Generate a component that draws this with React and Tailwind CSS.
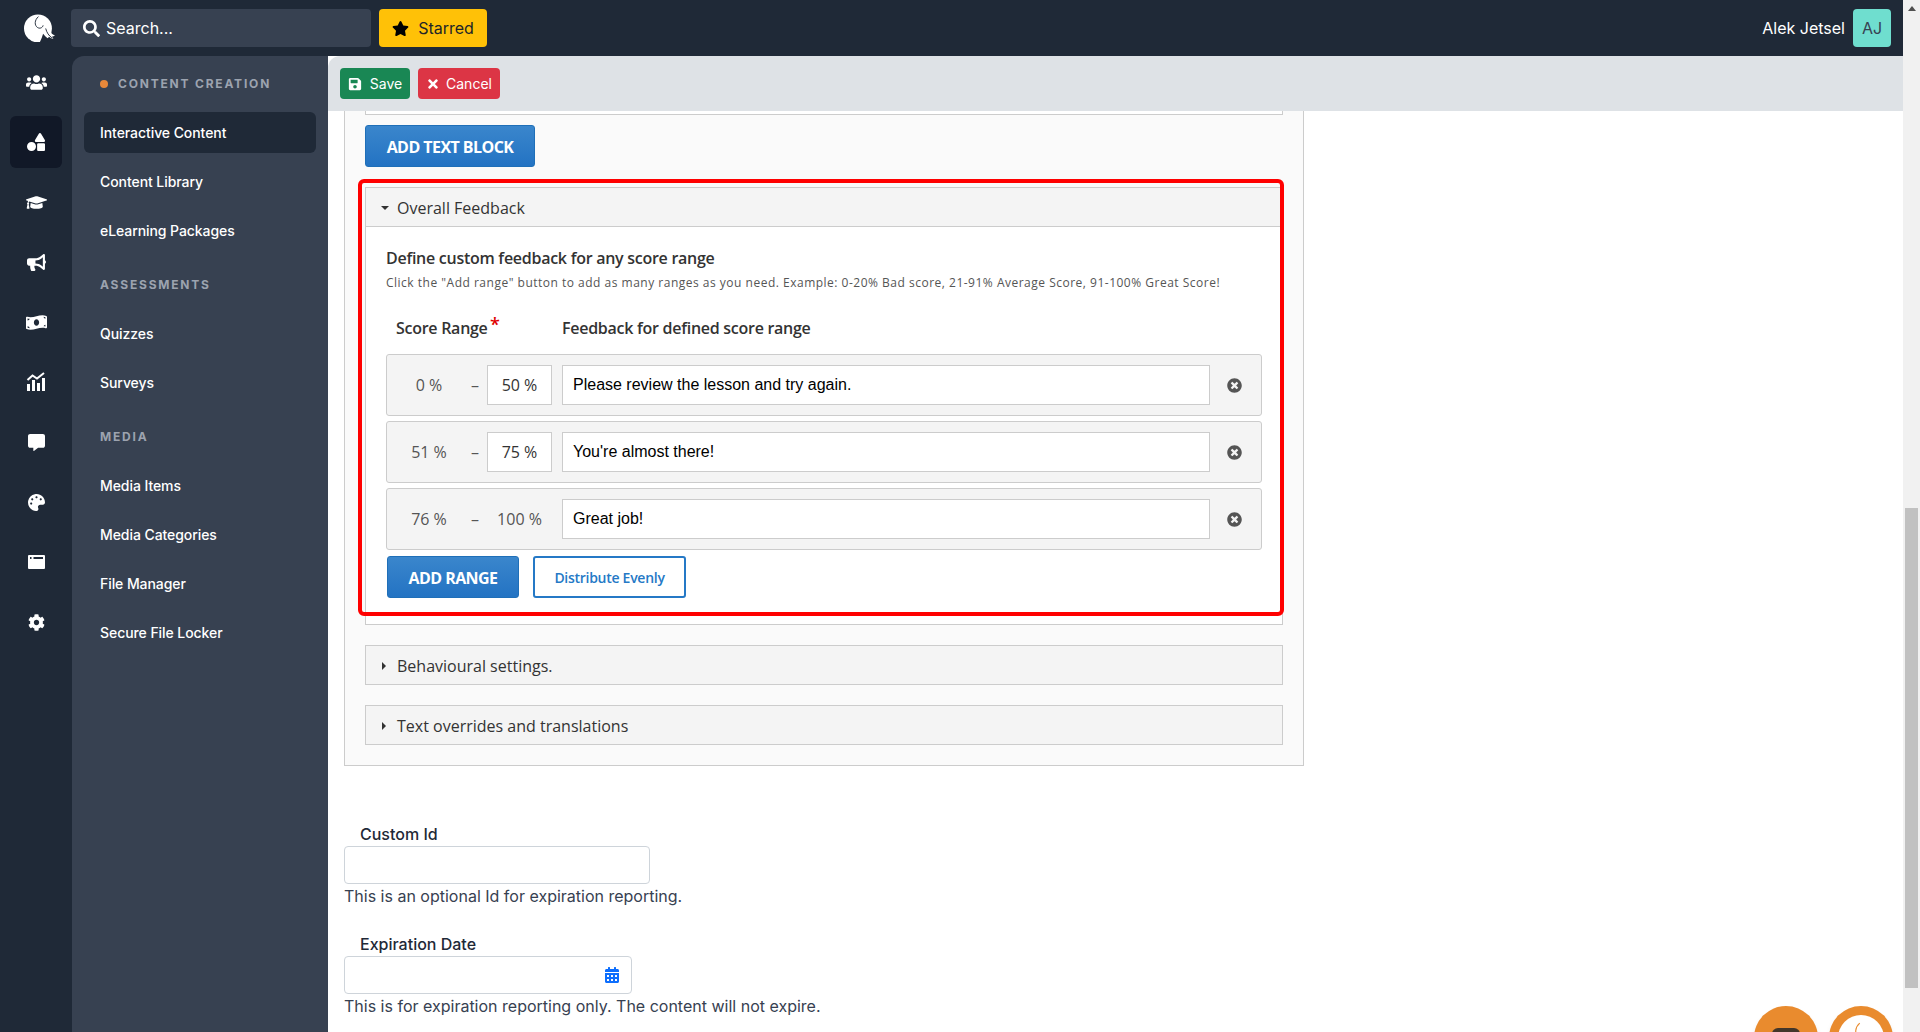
import React from 'react';
import {
  FaUsers, FaShapes, FaGraduationCap, FaBullhorn, FaMoneyBillWave, FaCommentAlt, FaPalette,
  FaCog, FaSearch, FaStar, FaSave, FaTimes, FaTimesCircle, FaCalendarAlt,
} from 'react-icons/fa';

const inter = 'font-["Inter",sans-serif]';

function ChartIcon() {
  return (
    <svg viewBox="0 0 20 20" width="20" height="20" fill="currentColor">
      <path d="M1.500 8 L6.500 3.500 L11 6.500 L18 1" fill="none" stroke="currentColor" strokeWidth="2" />
      <rect x="1" y="12" width="3" height="7" />
      <rect x="6" y="8" width="3" height="11" />
      <rect x="11" y="11" width="3" height="8" />
      <rect x="16" y="6" width="3" height="13" />
    </svg>
  );
}

function WindowIcon() {
  return (
    <svg viewBox="0 0 17 14" width="17" height="14">
      <rect width="17" height="14" rx="1" fill="#ffffff" />
      <rect x="2" y="2" width="1.500" height="2" fill="#1f2937" />
      <rect x="5.500" y="2" width="9.500" height="2" fill="#1f2937" />
    </svg>
  );
}

function ElephantLogo({ body = '#ffffff', detail = '#1f2937', size = 31 }) {
  return (
    <svg viewBox="0 0 30 28" width={size} height={(size * 28) / 30}>
      <circle cx="13.500" cy="14" r="13.500" fill={body} />
      <path d="M24 6 C26 11 25 16 27 19 L30 21 L27 22 L28.500 24 C25 24 23 21 22 18 Z" fill={body} />
      <path d="M14 2.500 C10 6 10 11 13 13 C15 14.500 18 13.500 18.500 11" fill="none" stroke={detail} strokeWidth="0.9" />
      <path d="M21 14 C22 18 24 21 27 23" fill="none" stroke={detail} strokeWidth="0.9" />
      <path d="M18.500 19 C17.500 22 16.500 25 15 28 L22 28 C23 26 24 25 24 24 C22 23 20 21 18.500 19 Z" fill={detail} />
    </svg>
  );
}

const railItems = [
  { icon: <FaUsers size={21} /> },
  { icon: <FaShapes size={18} />, active: true },
  { icon: <FaGraduationCap size={21} /> },
  { icon: <FaBullhorn size={19} /> },
  { icon: <FaMoneyBillWave size={21} /> },
  { icon: <ChartIcon /> },
  { icon: <FaCommentAlt size={17} /> },
  { icon: <FaPalette size={17} /> },
  { icon: <WindowIcon /> },
  { icon: <FaCog size={17} /> },
];

const navGroups = [
  { title: 'CONTENT CREATION', dot: true, items: ['Interactive Content', 'Content Library', 'eLearning Packages'] },
  { title: 'ASSESSMENTS', items: ['Quizzes', 'Surveys'] },
  { title: 'MEDIA', items: ['Media Items', 'Media Categories', 'File Manager', 'Secure File Locker'] },
];

const ranges = [
  { from: '0 %', to: '50 %', text: 'Please review the lesson and try again.', editable: true },
  { from: '51 %', to: '75 %', text: "You're almost there!", editable: true },
  { from: '76 %', to: '100 %', text: 'Great job!', editable: false },
];

function Rail() {
  return (
    <div className="flex w-[72px] shrink-0 flex-col items-center bg-[#1f2937] text-white">
      {railItems.map((item, idx) => (
        <div
          key={idx}
          className={`mb-2 flex h-[52px] w-[52px] shrink-0 items-center justify-center rounded-md ${item.active ? 'bg-[#111827]' : ''}`}
        >
          {item.icon}
        </div>
      ))}
    </div>
  );
}

function Sidebar() {
  return (
    <div className={`w-[256px] shrink-0 rounded-tl-xl bg-[#374151] px-3 pt-[20px] ${inter}`}>
      {navGroups.map((group, idx) => (
        <div key={group.title} className={idx > 0 ? 'mt-[26px]' : ''}>
          <div className="flex h-[16px] items-center pl-4 text-xs font-bold tracking-[0.15em] text-[#9ca3af]">
            {group.dot && <span className="mr-[10px] h-2 w-2 rounded-full bg-[#e8883a]" />}
            {group.title}
          </div>
          <div className="mt-5 flex flex-col gap-2">
            {group.items.map((item) => (
              <div
                key={item}
                className={`flex h-[41px] items-center rounded-md pl-4 text-sm font-medium tracking-[-0.005em] text-white ${item === 'Interactive Content' ? 'bg-[#1f2937]' : ''}`}
              >
                {item}
              </div>
            ))}
          </div>
        </div>
      ))}
    </div>
  );
}

function AccordionHead({ title, open }) {
  return (
    <div className="flex h-[40px] items-center border border-[#cccccc] bg-[#f4f4f4] pt-[1px] text-base text-[#333333]">
      {open ? (
        <span className="ml-[15px] mr-[8px] h-0 w-0 border-x-[4px] border-t-[4px] border-x-transparent border-t-[#333333]" />
      ) : (
        <span className="ml-[16px] mr-[11px] h-0 w-0 border-y-[4px] border-l-[4px] border-y-transparent border-l-[#333333]" />
      )}
      <span>{title}</span>
    </div>
  );
}

function RangeRow({ row }) {
  return (
    <div className="flex h-[62px] items-center rounded-[3px] border border-[#cccccc] bg-[#f4f4f4] text-[#555555]">
      <div className="w-[84px] shrink-0 text-center text-base">{row.from}</div>
      <div className="w-[8px] shrink-0 text-center text-base">–</div>
      {row.editable ? (
        <div className="ml-[8px] flex h-[40px] w-[65px] shrink-0 items-center justify-center border border-[#cccccc] bg-white text-base text-[#333333]">
          {row.to}
        </div>
      ) : (
        <div className="ml-[8px] w-[65px] shrink-0 text-center text-base">{row.to}</div>
      )}
      <div className="ml-[10px] flex h-[40px] w-[648px] shrink-0 items-center border border-[#cccccc] bg-white pl-[10px] font-['Liberation_Sans',sans-serif] text-base text-black">
        {row.text}
      </div>
      <FaTimesCircle size={15} className="ml-[17px] text-[#555555]" />
    </div>
  );
}

function FeedbackPanel() {
  return (
    <div className="relative mt-[20px]">
      <AccordionHead title="Overall Feedback" open />
      <div className="border-x border-b border-[#cccccc] bg-white pl-[20px] pr-[20px] pt-[21px] pb-[26px]">
        <div className="text-base font-semibold leading-[20px] tracking-[-0.27px] text-[#333333]">Define custom feedback for any score range</div>
        <div className="mt-[5px] text-xs leading-[20px] tracking-[0.5px] text-[#555555]">
          Click the "Add range" button to add as many ranges as you need. Example: 0-20% Bad score, 21-91% Average Score, 91-100% Great Score!
        </div>
        <div className="relative mt-[24px] flex h-[22px] items-center text-base font-semibold tracking-[-0.27px] text-[#333333]">
          <span className="ml-[10px] w-[166px]">
            Score Range
            <span className="absolute left-[104px] top-[-7px] text-lg text-[#e00000]">*</span>
          </span>
          <span>Feedback for defined score range</span>
        </div>
        <div className="mt-[15px] flex flex-col gap-[5px]">
          {ranges.map((row) => (
            <RangeRow key={row.from} row={row} />
          ))}
        </div>
        <div className="ml-[1px] mt-[6px] flex gap-[14px]">
          <button className="h-[42px] w-[132px] rounded-[3px] border border-[#1f6fb8] bg-gradient-to-b from-[#3a86cc] to-[#2373c3] pt-[1px] text-base font-bold tracking-[-0.035em] text-white">
            ADD RANGE
          </button>
          <button className="h-[42px] w-[153px] rounded-[3px] border-2 border-[#2579c6] bg-white pt-[2px] text-sm font-semibold tracking-[-0.02em] text-[#2579c6]">
            Distribute Evenly
          </button>
        </div>
      </div>
      {/* annotation box from the screenshot */}
      <div className="pointer-events-none absolute left-[-7px] right-[-1px] top-[-8px] h-[437px] rounded-[6px] border-4 border-[#ff0000]" />
    </div>
  );
}

function Content() {
  return (
    <div className="flex min-w-0 flex-1 flex-col bg-white">
      <div className="flex h-[55px] shrink-0 items-center gap-2 rounded-tl-xl bg-[#dee2e6] pl-3">
        <button className="flex h-[31px] w-[70px] items-center justify-center gap-[8px] rounded bg-[#198754] text-sm text-white">
          <FaSave size={14} />
          Save
        </button>
        <button className="flex h-[31px] w-[82px] items-center justify-center gap-[6px] rounded bg-[#dc3545] text-sm text-white">
          <FaTimes size={14} />
          Cancel
        </button>
      </div>
      <div className="min-h-0 flex-1 overflow-hidden pl-4">
        <div className="w-[960px] border-x border-b border-[#cccccc] bg-[#fafafa] px-5 pb-[20px] font-['Open_Sans',sans-serif]">
          <div className="h-[4px] border-x border-b border-[#cccccc] bg-white" />
          <button className="mt-[10px] h-[42px] w-[170px] rounded-[3px] border border-[#1f6fb8] bg-gradient-to-b from-[#3a86cc] to-[#2373c3] pt-[1px] text-base font-bold tracking-[-0.035em] text-white">
            ADD TEXT BLOCK
          </button>
          <FeedbackPanel />
          <div className="mt-[20px]">
            <AccordionHead title="Behavioural settings." />
          </div>
          <div className="mt-[20px]">
            <AccordionHead title="Text overrides and translations" />
          </div>
        </div>
        <div className="mt-[57px] text-base text-[#374151]">
          <div className="pl-4 font-medium leading-[23px] text-[#1f2937]">Custom Id</div>
          <div className="h-[38px] w-[306px] rounded border border-[#ced4da] bg-white" />
          <div className="leading-[24px]">This is an optional Id for expiration reporting.</div>
          <div className="mt-[25px] pl-4 font-medium leading-[23px] text-[#1f2937]">Expiration Date</div>
          <div className="flex h-[38px] w-[288px] items-center justify-end rounded border border-[#ced4da] bg-white pr-[11px] text-[#0d6efd]">
            <FaCalendarAlt size={16} />
          </div>
          <div className="leading-[24px]">This is for expiration reporting only. The content will not expire.</div>
        </div>
      </div>
    </div>
  );
}

export default function App() {
  return (
    <div className={`relative flex h-screen w-full overflow-hidden bg-white ${inter}`}>
      <div className="flex min-w-0 flex-1 flex-col">
        <div className="flex h-14 shrink-0 items-center bg-[#1f2937]">
          <div className="flex w-[71px] shrink-0 justify-center pl-[7px]">
            <ElephantLogo />
          </div>
          <div className="flex h-[38px] w-[300px] items-center gap-[6px] rounded bg-[#374151] pl-3 text-base text-white">
            <FaSearch size={17} />
            Search...
          </div>
          <div className="ml-2 flex h-[38px] w-[108px] items-center justify-center gap-[9px] rounded bg-[#ffc107] text-base text-[#212529]">
            <FaStar size={17} className="text-black" />
            Starred
          </div>
          <div className="ml-auto mr-3 flex items-center gap-2 text-base text-white">
            Alek Jetsel
            <div className="flex h-[38px] w-[38px] items-center justify-center rounded bg-[#6fdecf] text-[#374151]">AJ</div>
          </div>
        </div>
        <div className="flex min-h-0 flex-1 bg-[#1f2937]">
          <Rail />
          <Sidebar />
          <Content />
        </div>
      </div>
      <div className="flex w-[17px] shrink-0 flex-col items-center bg-[#f1f1f1] pt-[6px]">
        <span className="h-0 w-0 border-x-[4px] border-b-[5px] border-x-transparent border-b-[#505050]" />
        <div className="mt-[497px] h-[480px] w-[13px] bg-[#c1c1c1]" />
      </div>
      {/* floating help widgets */}
      <div className="absolute left-[1754px] top-[1006px] flex h-16 w-16 justify-center rounded-full bg-[#e98b2e] pt-[22px] shadow-md">
        <div className="h-[30px] w-[28px] rounded-md bg-[#43362a]" />
      </div>
      <div className="absolute left-[1829px] top-[1006px] flex h-16 w-16 items-center justify-center rounded-full bg-[#e98b2e] shadow-md">
        <div className="flex h-[46px] w-[46px] items-center justify-center rounded-full bg-white">
          <ElephantLogo body="#ffffff" detail="#e98b2e" size={38} />
        </div>
      </div>
    </div>
  );
}
